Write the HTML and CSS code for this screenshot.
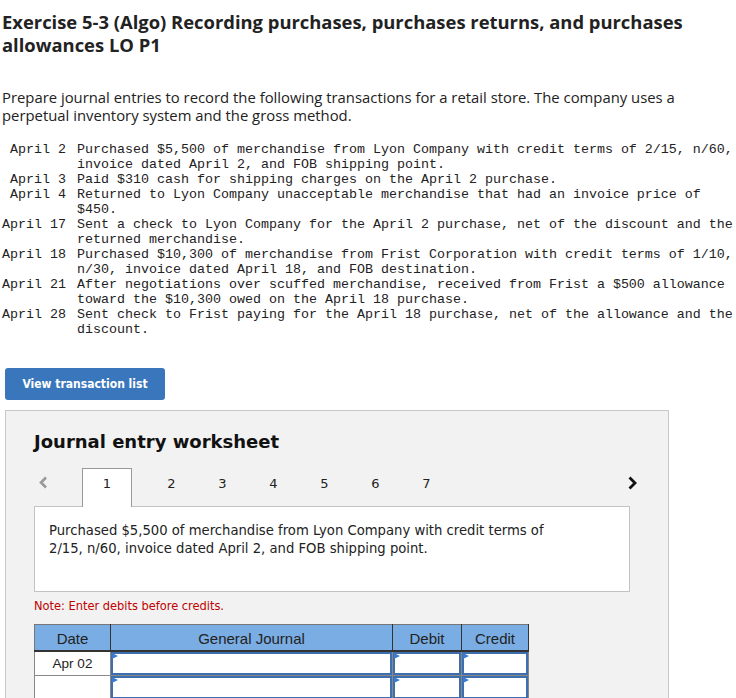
FILE: index.html
```html
<!DOCTYPE html>
<html lang="en">
<head>
    <meta charset="UTF-8">
    <title>Exercise 5-3 (Algo)</title>
    <link rel="stylesheet" href="styles.css">
</head>
<body>
<h1 class="title">Exercise 5-3 (Algo) Recording purchases, purchases returns, and purchases allowances LO P1</h1>

<p class="intro">Prepare journal entries to record the following transactions for a retail store. The company uses a perpetual inventory system and the gross method.</p>

<div class="events">
    <span class="day">April 2</span><span class="what">Purchased $5,500 of merchandise from Lyon Company with credit terms of 2/15, n/60, invoice dated April 2, and FOB shipping point.</span>
    <span class="day">April 3</span><span class="what">Paid $310 cash for shipping charges on the April 2 purchase.</span>
    <span class="day">April 4</span><span class="what">Returned to Lyon Company unacceptable merchandise that had an invoice price of $450.</span>
    <span class="day">April 17</span><span class="what">Sent a check to Lyon Company for the April 2 purchase, net of the discount and the returned merchandise.</span>
    <span class="day">April 18</span><span class="what">Purchased $10,300 of merchandise from Frist Corporation with credit terms of 1/10, n/30, invoice dated April 18, and FOB destination.</span>
    <span class="day">April 21</span><span class="what">After negotiations over scuffed merchandise, received from Frist a $500 allowance toward the $10,300 owed on the April 18 purchase.</span>
    <span class="day">April 28</span><span class="what">Sent check to Frist paying for the April 18 purchase, net of the allowance and the discount.</span>
</div>

<button class="list-btn">View transaction list</button>

<div class="worksheet">
    <h2>Journal entry worksheet</h2>

    <div class="tabs">
        <span class="arrow prev"><svg width="10" height="13" viewBox="0 0 10 13"><path d="M8 1.5 L3 6.5 L8 11.5" fill="none" stroke="#999" stroke-width="2.6"/></svg></span>
        <span class="tab active">1</span>
        <span class="tab">2</span>
        <span class="tab">3</span>
        <span class="tab">4</span>
        <span class="tab">5</span>
        <span class="tab">6</span>
        <span class="tab">7</span>
        <span class="arrow next"><svg width="11" height="14" viewBox="0 0 11 14"><path d="M2.5 1.5 L8 7 L2.5 12.5" fill="none" stroke="#111" stroke-width="2.8"/></svg></span>
    </div>

    <div class="prompt">Purchased $5,500 of merchandise from Lyon Company with credit terms of 2/15, n/60, invoice dated April 2, and FOB shipping point.</div>

    <p class="note">Note: Enter debits before credits.</p>

    <table class="journal">
        <tr>
            <th class="c-date">Date</th>
            <th class="c-acct">General Journal</th>
            <th class="c-debit">Debit</th>
            <th class="c-credit">Credit</th>
        </tr>
        <tr>
            <td class="date">Apr 02</td>
            <td><div class="entry"></div></td>
            <td><div class="entry"></div></td>
            <td><div class="entry"></div></td>
        </tr>
        <tr>
            <td class="date"></td>
            <td><div class="entry"></div></td>
            <td><div class="entry"></div></td>
            <td><div class="entry"></div></td>
        </tr>
        <tr>
            <td class="date"></td>
            <td><div class="entry"></div></td>
            <td><div class="entry"></div></td>
            <td><div class="entry"></div></td>
        </tr>
    </table>
</div>
</body>
</html>
```

FILE: styles.css
```css
body { margin: 0; padding: 0 2px 40px; background: #fff; color: #222; }

.title { margin: 10px 0 0; font-family: "Open Sans", Lato, sans-serif; font-weight: bold; font-size: 18.4px; line-height: 23px; color: #222; }
.intro { margin: 32px 0 0; font-family: "Open Sans", Lato, sans-serif; font-size: 14.85px; line-height: 18px; color: #222; }

.events { margin-top: 18px; display: grid; grid-template-columns: 64px 1fr; column-gap: 11px; font-family: "Liberation Mono", "Courier New", monospace; font-size: 13.333px; line-height: 15px; color: #222; }
.events .day { text-align: right; white-space: nowrap; }

.list-btn { display: block; margin: 31px 0 0 3px; width: 160px; height: 32px; border: none; border-radius: 3px; background: #3a76bb; color: #fff; font-family: "DejaVu Sans Condensed", "DejaVu Sans", sans-serif; font-weight: bold; font-size: 12px; padding: 0; }

.worksheet { margin: 10px 0 0 3px; width: 664px; box-sizing: border-box; border: 1px solid #c8c8c8; background: #f2f2f2; padding: 20px 38px 0 28px; }
.worksheet h2 { margin: 0; font-family: "DejaVu Sans", sans-serif; font-weight: bold; font-size: 18px; line-height: 22px; color: #111; }

.tabs { margin-top: 15px; display: flex; align-items: flex-start; height: 39px; margin-bottom: -1px; position: relative; font-family: "DejaVu Sans", sans-serif; font-size: 13px; line-height: 20px; color: #222; }
.tabs .arrow { display: flex; padding-top: 8px; }
.tabs .prev { width: 48px; padding-left: 4px; box-sizing: border-box; }
.tabs .next { margin-left: auto; margin-right: -8px; }
.tab { width: 51px; height: 39px; box-sizing: border-box; padding-top: 6px; text-align: center; }
.tab.active { width: 50px; margin-right: 14px; border: 1px solid #999; border-bottom: none; background: #fff; padding-top: 5px; }

.prompt { height: 86px; box-sizing: border-box; border: 1px solid #c3c3c3; background: #fff; padding: 15px 70px 13px 14px; font-family: "DejaVu Sans", sans-serif; font-size: 13.2px; line-height: 18px; color: #222; }

.note { margin: 6px 0 0; font-family: "DejaVu Sans Condensed", "DejaVu Sans", sans-serif; font-size: 12.7px; line-height: 15px; color: #c00000; }

.journal { margin-top: 11px; border-collapse: collapse; table-layout: fixed; width: 494px; font-family: "Liberation Sans", Arial, sans-serif; font-size: 15px; color: #222; background: #fff; }
.journal th { height: 23px; padding: 2px 0 0; background: #7aade3; font-weight: normal; border: 1px solid #333; border-top-color: #777; border-bottom-width: 2px; }
.journal th:first-child { border-left-color: #777; }
.journal .c-date { width: 75px; }
.journal .c-acct { width: 281px; }
.journal .c-debit { width: 68px; }
.journal .c-credit { width: 66px; }
.journal td { height: 23px; padding: 0; border: 1px solid #888; }
.journal td.date { text-align: center; font-size: 13.5px; }
.entry { position: relative; height: 23px; box-sizing: border-box; border: 2px solid #3d6fae; }
.entry::before { content: ""; position: absolute; left: -1px; top: -1px; border-left: 6px solid #3b7bd0; border-top: 3px solid transparent; border-bottom: 3px solid transparent; }
```
